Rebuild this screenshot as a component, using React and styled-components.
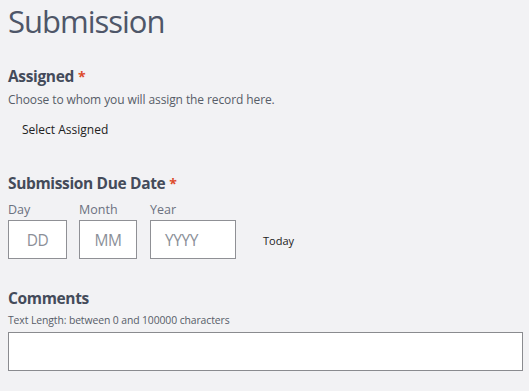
import React from "react";
import styled, { createGlobalStyle } from "styled-components";

const Global = createGlobalStyle`
  html, body { margin: 0; padding: 0; background: #f2f2f4; }
  body { font-family: "Open Sans", "Noto Sans", sans-serif; color: #4b5262; }
`;

const Page = styled.div`
  padding: 0 6px 0 8px;
  display: flex;
  flex-direction: column;
`;

const Title = styled.h1`
  margin: 1px 0 0;
  font-size: 31px;
  letter-spacing: -1px;
  font-weight: 400;
  line-height: 40px;
  color: #4e5668;
`;

const Section = styled.section`
  display: flex;
  flex-direction: column;
  margin-top: ${(p) => p.$top}px;
`;

const FieldLabel = styled.div`
  font-size: 15.5px;
  letter-spacing: -0.35px;
  font-weight: 700;
  line-height: 20px;
  height: 20px;
  color: #444b5a;
`;

const Required = styled.span`
  color: #dd4b2c;
  margin-left: 4px;
  font-size: 14px;
  line-height: 0;
  font-weight: 700;
`;

const Help = styled.div`
  font-size: ${(p) => p.$size}px;
  line-height: ${(p) => p.$lh}px;
  letter-spacing: -0.1px;
  color: #575d68;
  margin-top: ${(p) => p.$top}px;
`;

const SelectText = styled.div`
  font-size: 12px;
  color: #222;
  margin: 14px 0 0 14px;
  line-height: 16px;
`;

const DateRow = styled.div`
  display: flex;
  align-items: flex-end;
  margin-top: 8px;
`;

const DatePart = styled.div`
  display: flex;
  flex-direction: column;
  margin-right: ${(p) => p.$gap}px;
`;

const PartLabel = styled.div`
  font-size: 12.5px;
  line-height: 18px;
  color: #6b7180;
  margin-bottom: 1px;
`;

const Box = styled.div`
  width: ${(p) => p.$w}px;
  height: 37px;
  border: 1px solid #8f9095;
  background: #fff;
  display: flex;
  align-items: center;
  justify-content: ${(p) => (p.$left ? "flex-start" : "center")};
  padding-left: ${(p) => p.$pad || 0}px;
  font-size: 15.5px;
  letter-spacing: -0.4px;
  color: #8b8f98;
`;

const TodayText = styled.div`
  font-size: 11px;
  line-height: 16px;
  color: #222;
  margin: 0 0 10px 27px;
`;

const Comment = styled.div`
  height: 37px;
  border: 1px solid #8a8b8f;
  background: #fff;
  margin-top: 5px;
`;

export default function App() {
  return (
    <>
      <Global />
      <Page>
        <Title>Submission</Title>
        <Section $top={25}>
          <FieldLabel>
            Assigned<Required>*</Required>
          </FieldLabel>
          <Help $size={12} $lh={16} $top={6}>
            Choose to whom you will assign the record here.
          </Help>
          <SelectText>Select Assigned</SelectText>
        </Section>
        <Section $top={35}>
          <FieldLabel>
            Submission Due Date<Required>*</Required>
          </FieldLabel>
          <DateRow>
            <DatePart $gap={12}>
              <PartLabel>Day</PartLabel>
              <Box $w={57}>DD</Box>
            </DatePart>
            <DatePart $gap={13}>
              <PartLabel>Month</PartLabel>
              <Box $w={56}>MM</Box>
            </DatePart>
            <DatePart $gap={0}>
              <PartLabel>Year</PartLabel>
              <Box $w={70} $pad={14} $left>
                YYYY
              </Box>
            </DatePart>
            <TodayText>Today</TodayText>
          </DateRow>
        </Section>
        <Section $top={29}>
          <FieldLabel>Comments</FieldLabel>
          <Help $size={10.4} $lh={14} $top={5}>
            Text Length: between 0 and 100000 characters
          </Help>
          <Comment />
        </Section>
      </Page>
    </>
  );
}
